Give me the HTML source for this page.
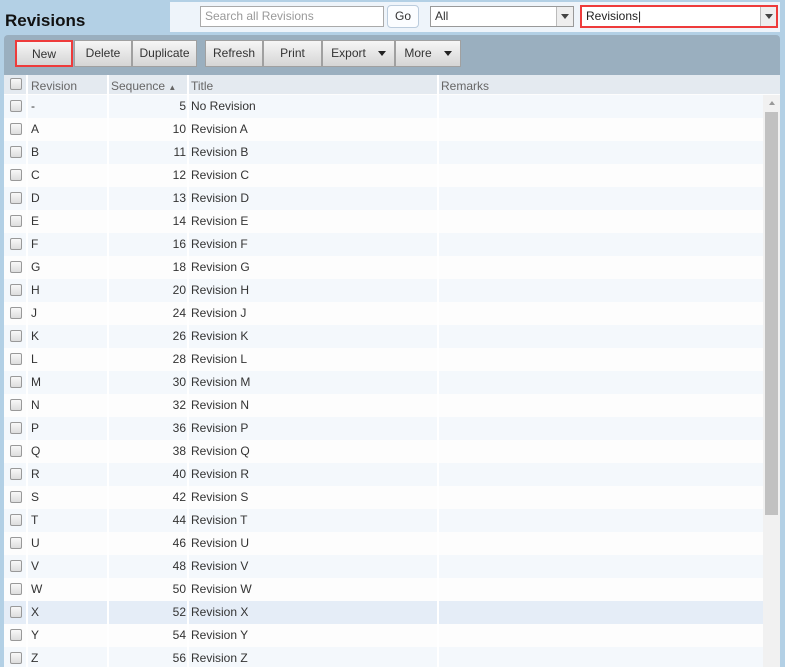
<!DOCTYPE html>
<html><head><style>
*{margin:0;padding:0;box-sizing:border-box}
body{width:785px;height:667px;overflow:hidden;background:#b3d0e5;font-family:"Liberation Sans",sans-serif;font-size:12px;color:#333;position:relative}
.abs{position:absolute}
h1{position:absolute;left:5px;top:11px;font-size:17px;font-weight:bold;color:#111}
.sp{left:170px;top:2px;width:610px;height:30px;background:#eef4fa}
.inp{background:#fff;border:1px solid #aaa;height:21px;top:6px;line-height:19px;padding-left:4px;color:#999}
.tb{left:4px;top:35px;width:776px;height:40px;background:#9aafbf;border-radius:4px 4px 0 0}
.btn{top:40px;height:27px;border:1px solid #a0a0a0;background:linear-gradient(#f6f6f6,#d5d5d5);text-align:center;line-height:25px;color:#333}
.arr{display:inline-block;width:0;height:0;border-left:4px solid transparent;border-right:4px solid transparent;border-top:5px solid #222;vertical-align:middle;margin-left:12px}
.grid{left:4px;top:75px;width:776px;height:592px;background:#fdfdfd;overflow:hidden}
.hdr{position:absolute;left:0;top:0;width:776px;height:19px;background:#e4eaf0;color:#666}
.row{position:absolute;left:0;width:759px;height:23px;line-height:23px}
.row.o{background:#f4f8fc}.row.s{background:#e5edf7}
.cb{position:absolute;left:6px;width:12px;height:12px;border:1px solid #999;border-radius:2px;background:linear-gradient(#f8f8f8,#ddd)}
.vl{position:absolute;top:0;width:2px;height:592px;background:#fff}
</style></head><body>
<h1>Revisions</h1>
<div class="abs sp"></div>
<div class="abs inp" style="left:200px;width:184px">Search all Revisions</div>
<div class="abs" style="left:387px;top:5px;width:32px;height:23px;border:1px solid #bcd;border-radius:4px;background:#fbfdff;text-align:center;line-height:21px">Go</div>
<div class="abs inp" style="left:430px;width:144px;color:#333;border-color:#999">All<div class="abs" style="right:0;top:0;width:17px;height:19px;border-left:1px solid #bbb;background:#eee"><span class="arr" style="margin:7px 0 0 4px;border-top-color:#444;display:block"></span></div></div>
<div class="abs inp" style="left:580px;width:198px;height:23px;top:5px;border:2px solid #ee3b3b;color:#222">Revisions|<div class="abs" style="right:0;top:0;width:16px;height:19px;border-left:1px solid #bbb;background:#eee"><span class="arr" style="margin:7px 0 0 4px;border-top-color:#444;display:block"></span></div></div>
<div class="abs tb"></div>
<div class="abs btn" style="left:15px;width:58px;border:2px solid #ee3b3b">New</div>
<div class="abs btn" style="left:74px;width:58px">Delete</div>
<div class="abs btn" style="left:132px;width:65px">Duplicate</div>
<div class="abs btn" style="left:205px;width:58px">Refresh</div>
<div class="abs btn" style="left:263px;width:59px">Print</div>
<div class="abs btn" style="left:322px;width:73px">Export<span class="arr"></span></div>
<div class="abs btn" style="left:395px;width:66px">More<span class="arr"></span></div>
<div class="abs grid" id="g">
<div class="hdr"><div class="cb" style="top:3px"></div><span class="abs" style="left:27px;top:4px">Revision</span><span class="abs" style="left:107px;top:4px">Sequence <span style="font-size:8px">&#9650;</span></span><span class="abs" style="left:187px;top:4px">Title</span><span class="abs" style="left:437px;top:4px">Remarks</span></div>
<div id="rows"></div>
<div class="vl" style="left:22px"></div><div class="vl" style="left:103px"></div><div class="vl" style="left:183px"></div><div class="vl" style="left:433px"></div>
<div class="abs" style="left:759px;top:20px;width:17px;height:572px;background:#f1f1f1"></div>
<div class="abs" style="left:765px;top:26px;width:0;height:0;border-left:3px solid transparent;border-right:3px solid transparent;border-bottom:4px solid #999"></div>
<div class="abs" style="left:761px;top:37px;width:13px;height:403px;background:#c1c1c1"></div>
</div>
<script>
var d=[["-",5,"No Revision"]],L="ABCDEFGHJKLMNPQRSTUVWXYZ",s=[10,11,12,13,14,16,18,20,24,26,28,30,32,36,38,40,42,44,46,48,50,52,54,56];
for(var i=0;i<L.length;i++)d.push([L[i],s[i],"Revision "+L[i]]);
var h="";d.forEach(function(r,i){var c=i==22?"s":(i%2?"":"o");h+='<div class="row '+c+'" style="top:'+(20+i*23)+'px"><div class="cb" style="top:5px"></div><span class="abs" style="left:27px">'+r[0]+'</span><span class="abs" style="left:107px;width:75px;text-align:right">'+r[1]+'</span><span class="abs" style="left:187px">'+r[2]+'</span></div>';});
document.getElementById("rows").innerHTML=h;
</script>
</body></html>
